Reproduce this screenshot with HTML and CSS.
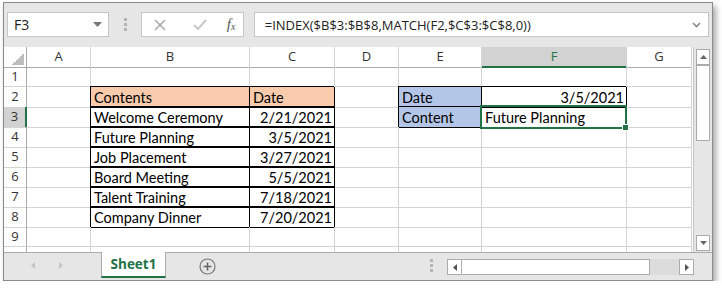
FILE: index.html
```html
<!DOCTYPE html>
<html lang="en">
<head>
    <meta charset="UTF-8">
    <title>Sheet1</title>
    <link rel="stylesheet" href="styles.css">
</head>
<body>
    <div class="window">
        <div class="formula-bar">
            <div class="name-box">
                <span>F3</span>
                <svg width="9" height="5" viewBox="0 0 9 5"><path d="M0 0h9L4.5 5z" fill="#777"/></svg>
            </div>
            <div class="grip"><i></i><i></i><i></i></div>
            <div class="fx-buttons">
                <svg width="12" height="12" viewBox="0 0 12 12"><path d="M1 1l10 10M11 1L1 11" stroke="#a8a8a8" stroke-width="1.5"/></svg>
                <svg width="14" height="12" viewBox="0 0 14 12"><path d="M1 6l4 4 8-9" stroke="#c8c8c8" stroke-width="2" fill="none"/></svg>
                <span class="fx">f<sub>x</sub></span>
            </div>
            <div class="formula-input">
                <span>=INDEX($B$3:$B$8,MATCH(F2,$C$3:$C$8,0))</span>
                <svg width="9" height="6" viewBox="0 0 9 6"><path d="M1 1l3.5 3.5L8 1" stroke="#888" stroke-width="1.6" fill="none"/></svg>
            </div>
        </div>

        <div class="sheet-area">
            <div class="grid">
                <div class="row head">
                    <div class="corner"><i></i></div>
                    <div>A</div><div>B</div><div>C</div><div>D</div><div>E</div><div class="active-col">F</div><div>G</div>
                </div>
                <div class="row">
                    <div class="rh">1</div><div></div><div></div><div></div><div></div><div></div><div></div><div></div>
                </div>
                <div class="row">
                    <div class="rh">2</div><div></div>
                    <div class="bx orange">Contents</div><div class="bx orange">Date</div>
                    <div></div>
                    <div class="bx blue">Date</div><div class="bx num">3/5/2021</div>
                    <div></div>
                </div>
                <div class="row">
                    <div class="rh active-row">3</div><div></div>
                    <div class="bx">Welcome Ceremony</div><div class="bx num">2/21/2021</div>
                    <div></div>
                    <div class="bx blue">Content</div>
                    <div class="bx selected">Future Planning<span class="sel"><span class="handle"></span></span></div>
                    <div></div>
                </div>
                <div class="row">
                    <div class="rh">4</div><div></div>
                    <div class="bx">Future Planning</div><div class="bx num">3/5/2021</div>
                    <div></div><div></div><div></div><div></div>
                </div>
                <div class="row">
                    <div class="rh">5</div><div></div>
                    <div class="bx">Job Placement</div><div class="bx num">3/27/2021</div>
                    <div></div><div></div><div></div><div></div>
                </div>
                <div class="row">
                    <div class="rh">6</div><div></div>
                    <div class="bx">Board Meeting</div><div class="bx num">5/5/2021</div>
                    <div></div><div></div><div></div><div></div>
                </div>
                <div class="row">
                    <div class="rh">7</div><div></div>
                    <div class="bx">Talent Training</div><div class="bx num">7/18/2021</div>
                    <div></div><div></div><div></div><div></div>
                </div>
                <div class="row">
                    <div class="rh">8</div><div></div>
                    <div class="bx">Company Dinner</div><div class="bx num">7/20/2021</div>
                    <div></div><div></div><div></div><div></div>
                </div>
                <div class="row">
                    <div class="rh">9</div><div></div><div></div><div></div><div></div><div></div><div></div><div></div>
                </div>
                <div class="row">
                    <div class="rh"></div><div></div><div></div><div></div><div></div><div></div><div></div><div></div>
                </div>
            </div>
            <div class="vscroll">
                <div class="sbtn"><svg width="7" height="4" viewBox="0 0 7 4"><path d="M0 4h7L3.5 0z" fill="#666"/></svg></div>
                <div class="vthumb"></div>
                <div class="vtrack"></div>
                <div class="sbtn"><svg width="7" height="4" viewBox="0 0 7 4"><path d="M0 0h7L3.5 4z" fill="#666"/></svg></div>
            </div>
        </div>

        <div class="tab-bar">
            <div class="nav">
                <svg width="4" height="7" viewBox="0 0 4 7"><path d="M4 0v7L0 3.5z" fill="#c4c4c4"/></svg>
                <svg width="4" height="7" viewBox="0 0 4 7"><path d="M0 0v7l4-3.5z" fill="#c4c4c4"/></svg>
            </div>
            <div class="sheet-tab">Sheet1</div>
            <div class="add-sheet">
                <svg width="17" height="17" viewBox="0 0 17 17"><circle cx="8.5" cy="8.5" r="7.5" fill="none" stroke="#777" stroke-width="1.2"/><path d="M8.5 4.5v8M4.5 8.5h8" stroke="#666" stroke-width="1.6"/></svg>
            </div>
            <div class="spacer"></div>
            <div class="grip tab-grip"><i></i><i></i><i></i></div>
            <div class="hscroll">
                <div class="hbtn"><svg width="4" height="7" viewBox="0 0 4 7"><path d="M4 0v7L0 3.5z" fill="#555"/></svg></div>
                <div class="hthumb"></div>
                <div class="htrack"></div>
                <div class="hbtn"><svg width="4" height="7" viewBox="0 0 4 7"><path d="M0 0v7l4-3.5z" fill="#555"/></svg></div>
            </div>
        </div>
    </div>
</body>
</html>
```

FILE: styles.css
```css
body {
    margin: 0;
    background: #fff;
    font-family: 'Open Sans', 'Liberation Sans', sans-serif;
}

.window {
    margin: 2px 0 0 3px;
    width: 710px;
    height: 279px;
    box-sizing: border-box;
    border: 1px solid #8a8a8a;
    background: #e6e6e6;
    box-shadow: 3px 4px 6px rgba(0, 0, 0, 0.35);
    display: flex;
    flex-direction: column;
}

/* formula bar */
.formula-bar {
    height: 44px;
    box-sizing: border-box;
    padding: 9px 3px 0 3px;
    display: flex;
    align-items: flex-start;
}

.name-box {
    width: 102px;
    height: 25px;
    box-sizing: border-box;
    background: #fff;
    border: 1px solid #c6c6c6;
    display: flex;
    align-items: center;
    justify-content: space-between;
    padding: 0 6px 0 6px;
    font-size: 14px;
    color: #222;
}

.grip {
    width: 3px;
    margin: 6px 14px 0 15px;
    display: flex;
    flex-direction: column;
    gap: 2px;
}

.grip i {
    display: block;
    width: 3px;
    height: 3px;
    background: #b4b4b4;
}

.fx-buttons {
    width: 103px;
    height: 25px;
    box-sizing: border-box;
    background: #fff;
    border: 1px solid #c6c6c6;
    display: flex;
    align-items: center;
    padding: 0 0 0 12px;
}

.fx-buttons svg:nth-child(2) {
    margin-left: 27px;
}

.fx {
    margin-left: 20px;
    font-family: 'Liberation Serif', serif;
    font-style: italic;
    font-size: 15px;
    color: #555;
}

.fx sub {
    font-size: 10px;
    vertical-align: -1px;
}

.formula-input {
    width: 456px;
    height: 25px;
    margin-left: 10px;
    box-sizing: border-box;
    background: #fff;
    border: 1px solid #c6c6c6;
    display: flex;
    align-items: center;
    justify-content: space-between;
    padding: 0 7px 0 10px;
    font-size: 13px;
    color: #222;
}

/* sheet */
.sheet-area {
    height: 205px;
    display: flex;
    overflow: hidden;
}

.grid {
    width: 690px;
    box-sizing: border-box;
    border-right: 1px solid #c6c6c6;
    background: #fff;
    overflow: hidden;
}

.row {
    display: grid;
    grid-template-columns: 23px 64px 159px 85px 64px 83px 145px 65px;
    height: 20px;
}

.row > div {
    box-sizing: border-box;
    border-right: 1px solid #d4d4d4;
    border-bottom: 1px solid #d4d4d4;
    font-family: 'Lato', 'Liberation Sans', sans-serif;
    font-size: 14.5px;
    line-height: 19px;
    padding: 1px 3px 0 3px;
    white-space: nowrap;
    color: #000;
}

.row.head > div,
.row > .rh {
    font-family: 'Open Sans', 'Liberation Sans', sans-serif;
    font-size: 13px;
    color: #333;
    text-align: center;
    border-color: #ababab;
    padding: 0;
}

.row > .rh {
    border-bottom-color: #d4d4d4;
}

.row.head > div {
    border-right-color: #d4d4d4;
    border-bottom-color: #ababab;
}

.row.head > .corner {
    position: relative;
    border-right-color: #ababab;
}

.corner i {
    position: absolute;
    right: 2px;
    bottom: 2px;
    width: 12px;
    height: 12px;
    background: linear-gradient(to bottom right, transparent 50%, #bdbdbd 50%);
}

.row.head > .active-col {
    background: #d2d2d2;
    color: #217346;
    border-bottom: 2px solid #217346;
}

.row > .active-row {
    background: #d2d2d2;
    border-right: 2px solid #217346;
}

.row > .bx {
    border-right-color: #000;
    border-bottom-color: #000;
    box-shadow: -1px -1px 0 #000;
}

.row > .orange {
    background: #f8cbad;
}

.row > .blue {
    background: #b4c6e7;
}

.row > .num {
    text-align: right;
    padding-right: 2px;
}

.selected {
    position: relative;
}

.sel {
    position: absolute;
    left: -2px;
    top: -2px;
    right: -1px;
    bottom: -2px;
    border: 2px solid #217346;
}

.handle {
    position: absolute;
    right: -4px;
    bottom: -4px;
    width: 5px;
    height: 5px;
    background: #217346;
    border: 1px solid #fff;
}

.vscroll {
    width: 18px;
    padding-left: 2px;
    box-sizing: border-box;
    display: flex;
    flex-direction: column;
}

.sbtn {
    height: 16px;
    width: 14px;
    margin: 2px 0 0 0;
    box-sizing: border-box;
    background: #fff;
    border: 1px solid #ababab;
    display: flex;
    align-items: center;
    justify-content: center;
}

.sbtn:last-child {
    margin: 0 0 1px 0;
}

.vthumb {
    height: 76px;
    width: 14px;
    box-sizing: border-box;
    background: #fff;
    border: 1px solid #ababab;
    margin-top: 0;
}

.vtrack {
    flex: 1;
}

/* tabs */
.tab-bar {
    flex: 1;
    border-top: 1px solid #ababab;
    display: flex;
    align-items: flex-start;
}

.nav {
    width: 97px;
    display: flex;
    gap: 24px;
    padding: 9px 0 0 27px;
    box-sizing: border-box;
}

.sheet-tab {
    margin-top: -1px;
    width: 65px;
    height: 26px;
    box-sizing: border-box;
    background: #fff;
    border-left: 1px solid #ababab;
    border-right: 1px solid #ababab;
    border-bottom: 2px solid #217346;
    font-family: 'Open Sans', 'Liberation Sans', sans-serif;
    font-weight: 700;
    font-size: 13.5px;
    color: #217346;
    text-align: center;
    line-height: 24px;
}

.add-sheet {
    margin: 5px 0 0 33px;
    height: 17px;
}

.spacer {
    flex: 1;
}

.tab-grip {
    margin: 6px 14px 0 0;
}

.hscroll {
    margin: 6px 18px 0 0;
    width: 247px;
    height: 16px;
    display: flex;
}

.hbtn {
    width: 15px;
    box-sizing: border-box;
    background: #fff;
    border: 1px solid #ababab;
    display: flex;
    align-items: center;
    justify-content: center;
}

.hthumb {
    width: 188px;
    box-sizing: border-box;
    background: #fff;
    border: 1px solid #ababab;
    border-left: none;
}

.htrack {
    flex: 1;
    background: #dcdcdc;
}
```
